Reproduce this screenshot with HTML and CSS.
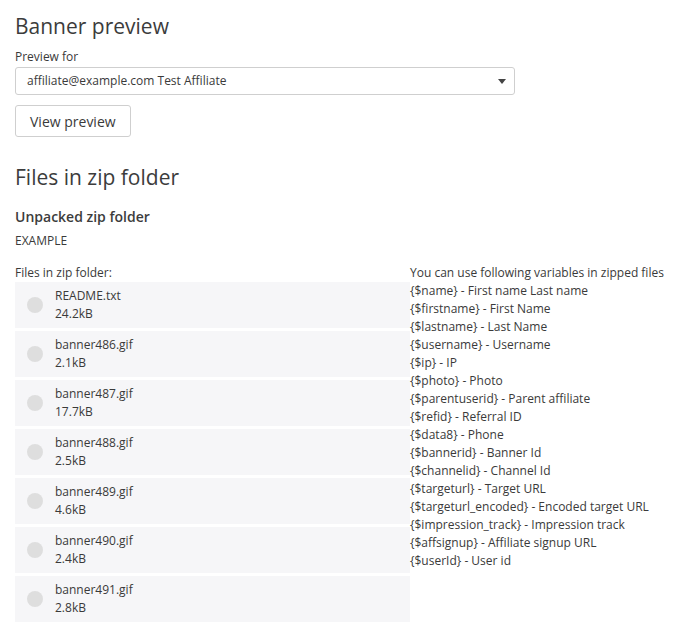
FILE: index.html
```html
<!DOCTYPE html>
<html lang="en">
<head>
<meta charset="utf-8">
<title>Banner preview</title>
<link rel="stylesheet" href="styles.css">
</head>
<body>
<div class="page">
  <h1 class="title">Banner preview</h1>
  <label class="field-label" for="pf">Preview for</label>
  <div class="select" id="pf">
    <span class="select-value">affiliate@example.com Test Affiliate</span>
    <span class="caret"></span>
  </div>
  <button class="btn" type="button">View preview</button>

  <h2 class="title title-2">Files in zip folder</h2>
  <h3 class="subtitle">Unpacked zip folder</h3>
  <div class="folder-name">EXAMPLE</div>

  <div class="columns">
    <div class="files">
      <div class="files-label">Files in zip folder:</div>
      <ul class="file-list">
        <li class="file"><span class="dot"></span><div class="file-info"><div>README.txt</div><div>24.2kB</div></div></li>
        <li class="file"><span class="dot"></span><div class="file-info"><div>banner486.gif</div><div>2.1kB</div></div></li>
        <li class="file"><span class="dot"></span><div class="file-info"><div>banner487.gif</div><div>17.7kB</div></div></li>
        <li class="file"><span class="dot"></span><div class="file-info"><div>banner488.gif</div><div>2.5kB</div></div></li>
        <li class="file"><span class="dot"></span><div class="file-info"><div>banner489.gif</div><div>4.6kB</div></div></li>
        <li class="file"><span class="dot"></span><div class="file-info"><div>banner490.gif</div><div>2.4kB</div></div></li>
        <li class="file"><span class="dot"></span><div class="file-info"><div>banner491.gif</div><div>2.8kB</div></div></li>
      </ul>
    </div>
    <div class="vars">
      <div>You can use following variables in zipped files</div>
      <div>{$name} - First name Last name</div>
      <div>{$firstname} - First Name</div>
      <div>{$lastname} - Last Name</div>
      <div>{$username} - Username</div>
      <div>{$ip} - IP</div>
      <div>{$photo} - Photo</div>
      <div>{$parentuserid} - Parent affiliate</div>
      <div>{$refid} - Referral ID</div>
      <div>{$data8} - Phone</div>
      <div>{$bannerid} - Banner Id</div>
      <div>{$channelid} - Channel Id</div>
      <div>{$targeturl} - Target URL</div>
      <div>{$targeturl_encoded} - Encoded target URL</div>
      <div>{$impression_track} - Impression track</div>
      <div>{$affsignup} - Affiliate signup URL</div>
      <div>{$userId} - User id</div>
    </div>
  </div>
</div>
</body>
</html>
```
FILE: styles.css
```css
* { box-sizing: border-box; }
html, body { margin: 0; padding: 0; background: #fff; }
body {
  font-family: "Open Sans", "Noto Sans", sans-serif;
  font-size: 12px;
  line-height: 18px;
  color: #3a3a3a;
}
.page { padding: 0 15px; }

.title {
  font-size: 21px;
  font-weight: 400;
  line-height: 30px;
  margin: 11px 0 0;
  color: #3c3c3c;
}
.title-2 { margin-top: 25px; }

.field-label {
  display: block;
  margin-top: 7px;
  line-height: 18px;
}
.select {
  margin-top: 1px;
  width: 500px;
  height: 28px;
  border: 1px solid #cfcfcf;
  border-radius: 3px;
  display: flex;
  align-items: center;
  justify-content: space-between;
  padding: 0 8px 0 11px;
  background: #fff;
}
.caret {
  width: 0;
  height: 0;
  border-left: 4px solid transparent;
  border-right: 4px solid transparent;
  border-top: 5px solid #444;
}
.btn {
  display: block;
  margin-top: 10px;
  height: 32px;
  padding: 0 14px;
  border: 1px solid #cfcfcf;
  border-radius: 3px;
  background: #fff;
  font-family: inherit;
  font-size: 14px;
  color: #3a3a3a;
}

.subtitle {
  font-size: 14px;
  font-weight: 600;
  line-height: 20px;
  margin: 15px 0 0;
  color: #3c3c3c;
}
.folder-name { margin-top: 5px; }

.columns {
  display: flex;
  margin-top: 14px;
}
.files { width: 395px; flex: none; }
.file-list { list-style: none; margin: 0; padding: 0; }
.file {
  display: flex;
  align-items: center;
  height: 46px;
  padding: 5px 12px;
  margin-bottom: 3px;
  background: #f6f6f8;
}
.dot {
  width: 16px;
  height: 16px;
  border-radius: 50%;
  background: #dedede;
  flex: none;
  margin-right: 12px;
}
.vars { white-space: nowrap; }
```
